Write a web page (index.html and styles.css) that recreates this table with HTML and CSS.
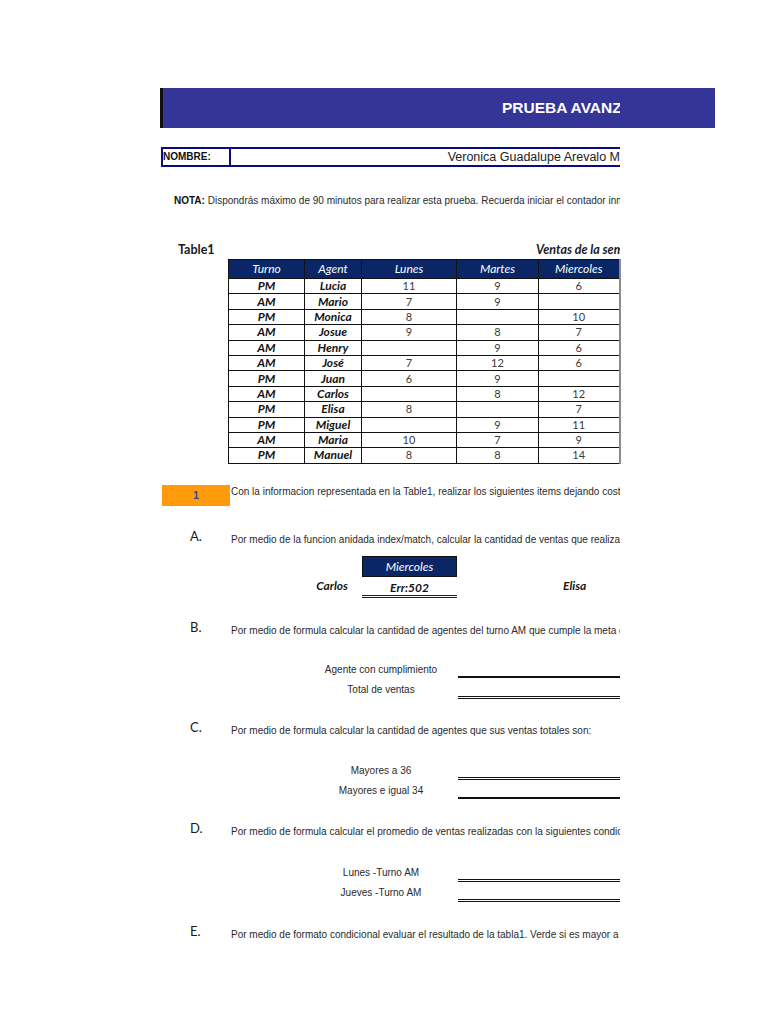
FILE: index.html
```html
<!DOCTYPE html>
<html lang="es">
<head>
<meta charset="utf-8">
<title>Prueba Avanzada</title>
<link rel="stylesheet" href="styles.css">
</head>
<body>
<div class="sheet">
  <div class="title-bar"><div class="title-clip">PRUEBA AVANZADA DE EXCEL</div></div>

  <div class="name-row">
    <div class="name-label">NOMBRE:</div>
    <div class="name-value">Veronica Guadalupe Arevalo M</div>
  </div>

  <div class="nota"><b>NOTA:</b> Dispondrás máximo de 90 minutos para realizar esta prueba. Recuerda iniciar el contador inmediatamente.</div>

  <div class="table-head">
    <div class="table-name">Table1</div>
    <div class="week-title">Ventas de la semana</div>
  </div>

  <div class="table-clip">
    <table class="sales">
      <colgroup>
        <col class="c-turno"><col class="c-agent"><col class="c-lunes"><col class="c-martes"><col class="c-mier"><col class="c-rest">
      </colgroup>
      <thead>
        <tr><th>Turno</th><th>Agent</th><th>Lunes</th><th>Martes</th><th>Miercoles</th><th>Jueves</th></tr>
      </thead>
      <tbody>
        <tr><td class="k">PM</td><td class="k">Lucia</td><td>11</td><td>9</td><td>6</td><td></td></tr>
        <tr><td class="k">AM</td><td class="k">Mario</td><td>7</td><td>9</td><td></td><td></td></tr>
        <tr><td class="k">PM</td><td class="k">Monica</td><td>8</td><td></td><td>10</td><td></td></tr>
        <tr><td class="k">AM</td><td class="k">Josue</td><td>9</td><td>8</td><td>7</td><td></td></tr>
        <tr><td class="k">AM</td><td class="k">Henry</td><td></td><td>9</td><td>6</td><td></td></tr>
        <tr><td class="k">AM</td><td class="k">José</td><td>7</td><td>12</td><td>6</td><td></td></tr>
        <tr><td class="k">PM</td><td class="k">Juan</td><td>6</td><td>9</td><td></td><td></td></tr>
        <tr><td class="k">AM</td><td class="k">Carlos</td><td></td><td>8</td><td>12</td><td></td></tr>
        <tr><td class="k">PM</td><td class="k">Elisa</td><td>8</td><td></td><td>7</td><td></td></tr>
        <tr><td class="k">PM</td><td class="k">Miguel</td><td></td><td>9</td><td>11</td><td></td></tr>
        <tr><td class="k">AM</td><td class="k">Maria</td><td>10</td><td>7</td><td>9</td><td></td></tr>
        <tr><td class="k">PM</td><td class="k">Manuel</td><td>8</td><td>8</td><td>14</td><td></td></tr>
      </tbody>
    </table>
  </div>

  <div class="item-row">
    <div class="item-num">1</div>
    <div class="item-text">Con la informacion representada en la Table1, realizar los siguientes items dejando costancia de las formulas utilizadas.</div>
  </div>

  <div class="q-head q-a">
    <div class="q-letter">A.</div>
    <div class="q-text">Por medio de la funcion anidada index/match, calcular la cantidad de ventas que realizaron los agentes.</div>
  </div>
  <div class="lookup-head">Miercoles</div>
  <div class="lookup-row">
    <div class="lookup-name">Carlos</div>
    <div class="lookup-value">Err:502</div>
    <div class="lookup-name2">Elisa</div>
  </div>

  <div class="q-head q-b">
    <div class="q-letter">B.</div>
    <div class="q-text">Por medio de formula calcular la cantidad de agentes del turno AM que cumple la meta de ventas.</div>
  </div>
  <div class="answers ans-b">
    <div class="ans-row"><div class="ans-label">Agente con cumplimiento</div><div class="ans-cell thick"></div></div>
    <div class="ans-row"><div class="ans-label">Total de ventas</div><div class="ans-cell double"></div></div>
  </div>

  <div class="q-head q-c">
    <div class="q-letter">C.</div>
    <div class="q-text">Por medio de formula calcular la cantidad de agentes que sus ventas totales son:</div>
  </div>
  <div class="answers ans-c">
    <div class="ans-row"><div class="ans-label">Mayores a 36</div><div class="ans-cell double"></div></div>
    <div class="ans-row"><div class="ans-label">Mayores e igual 34</div><div class="ans-cell thick"></div></div>
  </div>

  <div class="q-head q-d">
    <div class="q-letter">D.</div>
    <div class="q-text">Por medio de formula calcular el promedio de ventas realizadas con la siguientes condiciones:</div>
  </div>
  <div class="answers ans-d">
    <div class="ans-row"><div class="ans-label">Lunes -Turno AM</div><div class="ans-cell double"></div></div>
    <div class="ans-row"><div class="ans-label">Jueves -Turno AM</div><div class="ans-cell double"></div></div>
  </div>

  <div class="q-head q-e">
    <div class="q-letter">E.</div>
    <div class="q-text">Por medio de formato condicional evaluar el resultado de la tabla1. Verde si es mayor a la meta.</div>
  </div>
</div>
</body>
</html>
```

FILE: styles.css
```css
html, body {
  margin: 0;
  padding: 0;
  background: #ffffff;
}

body {
  font-family: "Liberation Sans", Arial, sans-serif;
  color: #2a2a2a;
}

.sheet {
  width: 768px;
  height: 1024px;
  overflow: hidden;
  padding-top: 88px;
  box-sizing: border-box;
}

/* Title */
.title-bar {
  margin-left: 160px;
  width: 555px;
  height: 40px;
  background: #353597;
  border-left: 3px solid #111111;
  box-sizing: border-box;
}

.title-clip {
  width: 457px;
  height: 40px;
  overflow: hidden;
  white-space: nowrap;
  padding-left: 339px;
  box-sizing: border-box;
  color: #ffffff;
  font-weight: bold;
  font-size: 15.5px;
  line-height: 40px;
}

/* Name */
.name-row {
  margin-top: 19px;
  margin-left: 161px;
  width: 459px;
  height: 20px;
  display: flex;
  border-top: 2px solid #0a0a82;
  border-bottom: 2px solid #0a0a82;
  border-left: 2px solid #0a0a82;
  box-sizing: border-box;
  overflow: hidden;
}

.name-label {
  width: 66px;
  flex: none;
  border-right: 2px solid #0a0a82;
  font-weight: bold;
  font-size: 10px;
  line-height: 16px;
  color: #111;
}

.name-value {
  flex: 1;
  text-align: right;
  white-space: nowrap;
  overflow: hidden;
  font-size: 12.5px;
  line-height: 16px;
  color: #222;
}

/* Nota */
.nota {
  margin-top: 27px;
  margin-left: 174px;
  width: 446px;
  overflow: hidden;
  white-space: nowrap;
  font-size: 10px;
  line-height: 14px;
  color: #2a2a2a;
}

.nota b {
  color: #111;
}

/* Table heading */
.table-head {
  margin-top: 33px;
  margin-left: 178px;
  width: 442px;
  height: 16px;
  display: flex;
  overflow: hidden;
  white-space: nowrap;
  font-family: Lato, "Liberation Sans", sans-serif;
  font-weight: bold;
  font-size: 12.5px;
  line-height: 17px;
  color: #1a1a1a;
}

.table-name {
  width: 358px;
  flex: none;
}

.week-title {
  font-style: italic;
  flex: none;
}

/* Sales table */
.table-clip {
  margin-top: 2px;
  margin-left: 228px;
  width: 393px;
  overflow: hidden;
}

.sales {
  border-collapse: collapse;
  table-layout: fixed;
  width: 480px;
  font-family: Lato, "Liberation Sans", sans-serif;
}

.c-turno { width: 76px; }
.c-agent { width: 57px; }
.c-lunes { width: 95px; }
.c-martes { width: 82px; }
.c-mier { width: 81px; }
.c-rest { width: 89px; }

.sales th {
  background: #0b2666;
  color: #ffffff;
  font-weight: normal;
  font-style: italic;
  font-size: 12px;
  height: 18px;
  padding: 0;
  border: 1px solid #111;
  text-align: center;
  line-height: 18px;
}

.sales th:last-child,
.sales td:last-child {
  border-left: 2px solid #8a8a8a;
}

.sales td {
  height: 14.4px;
  padding: 0;
  border: 1px solid #111;
  text-align: center;
  font-size: 11px;
  line-height: 14px;
  color: #3a3a3a;
}

.sales td.k {
  font-weight: bold;
  font-style: italic;
  font-size: 12px;
  color: #151515;
}

/* Item 1 */
.item-row {
  margin-top: 21px;
  margin-left: 162px;
  width: 458px;
  height: 21px;
  display: flex;
  overflow: hidden;
  white-space: nowrap;
}

.item-num {
  width: 68px;
  height: 21px;
  flex: none;
  background: #ff9a0a;
  color: #3b3b98;
  font-size: 10px;
  font-weight: bold;
  line-height: 21px;
  text-align: center;
}

.item-text {
  padding-left: 1px;
  font-size: 10px;
  line-height: 14px;
}

/* Question headings */
.q-head {
  margin-left: 190px;
  width: 430px;
  height: 17px;
  display: flex;
  align-items: flex-start;
  overflow: hidden;
  white-space: nowrap;
}

.q-letter {
  width: 41px;
  flex: none;
  font-family: Lato, "Liberation Sans", sans-serif;
  font-size: 13px;
  line-height: 12px;
  color: #1a1a1a;
}

.q-text {
  padding-top: 3px;
  font-size: 10px;
  line-height: 14px;
}

.q-a { margin-top: 24px; }
.q-b { margin-top: 23px; }
.q-c { margin-top: 21px; }
.q-d { margin-top: 21px; }
.q-e { margin-top: 22px; }

/* Lookup block (A) */
.lookup-head {
  margin-top: 9px;
  margin-left: 362px;
  width: 95px;
  height: 21px;
  box-sizing: border-box;
  background: #0b2666;
  border: 1px solid #111;
  color: #ffffff;
  font-family: Lato, "Liberation Sans", sans-serif;
  font-style: italic;
  font-size: 12px;
  line-height: 19px;
  text-align: center;
}

.lookup-row {
  margin-top: 1px;
  margin-left: 229px;
  display: flex;
  align-items: flex-start;
  font-family: Lato, "Liberation Sans", sans-serif;
  font-weight: bold;
  font-style: italic;
  font-size: 12px;
  color: #151515;
}

.lookup-name {
  width: 119px;
  margin-right: 14px;
  text-align: right;
  line-height: 15px;
}

.lookup-value {
  width: 95px;
  height: 17px;
  border-bottom: 3px double #222;
  text-align: center;
  line-height: 19px;
}

.lookup-name2 {
  margin-left: 106px;
  line-height: 15px;
}

/* Answer rows */
.answers {
  width: 620px;
}

.ans-b { margin-top: 22px; }
.ans-c { margin-top: 23px; }
.ans-d { margin-top: 24px; }

.ans-row {
  display: flex;
  align-items: flex-start;
  height: 20px;
}

.ans-label {
  margin-left: 305px;
  width: 152px;
  flex: none;
  text-align: center;
  white-space: nowrap;
  font-size: 10px;
  line-height: 20px;
  color: #2a2a2a;
}

.ans-cell {
  margin-left: 1px;
  width: 162px;
  height: 16px;
  flex: none;
}

.ans-cell.thick {
  border-bottom: 2px solid #111;
}

.ans-cell.double {
  height: 16px;
  border-bottom: 3px double #111;
}
```
